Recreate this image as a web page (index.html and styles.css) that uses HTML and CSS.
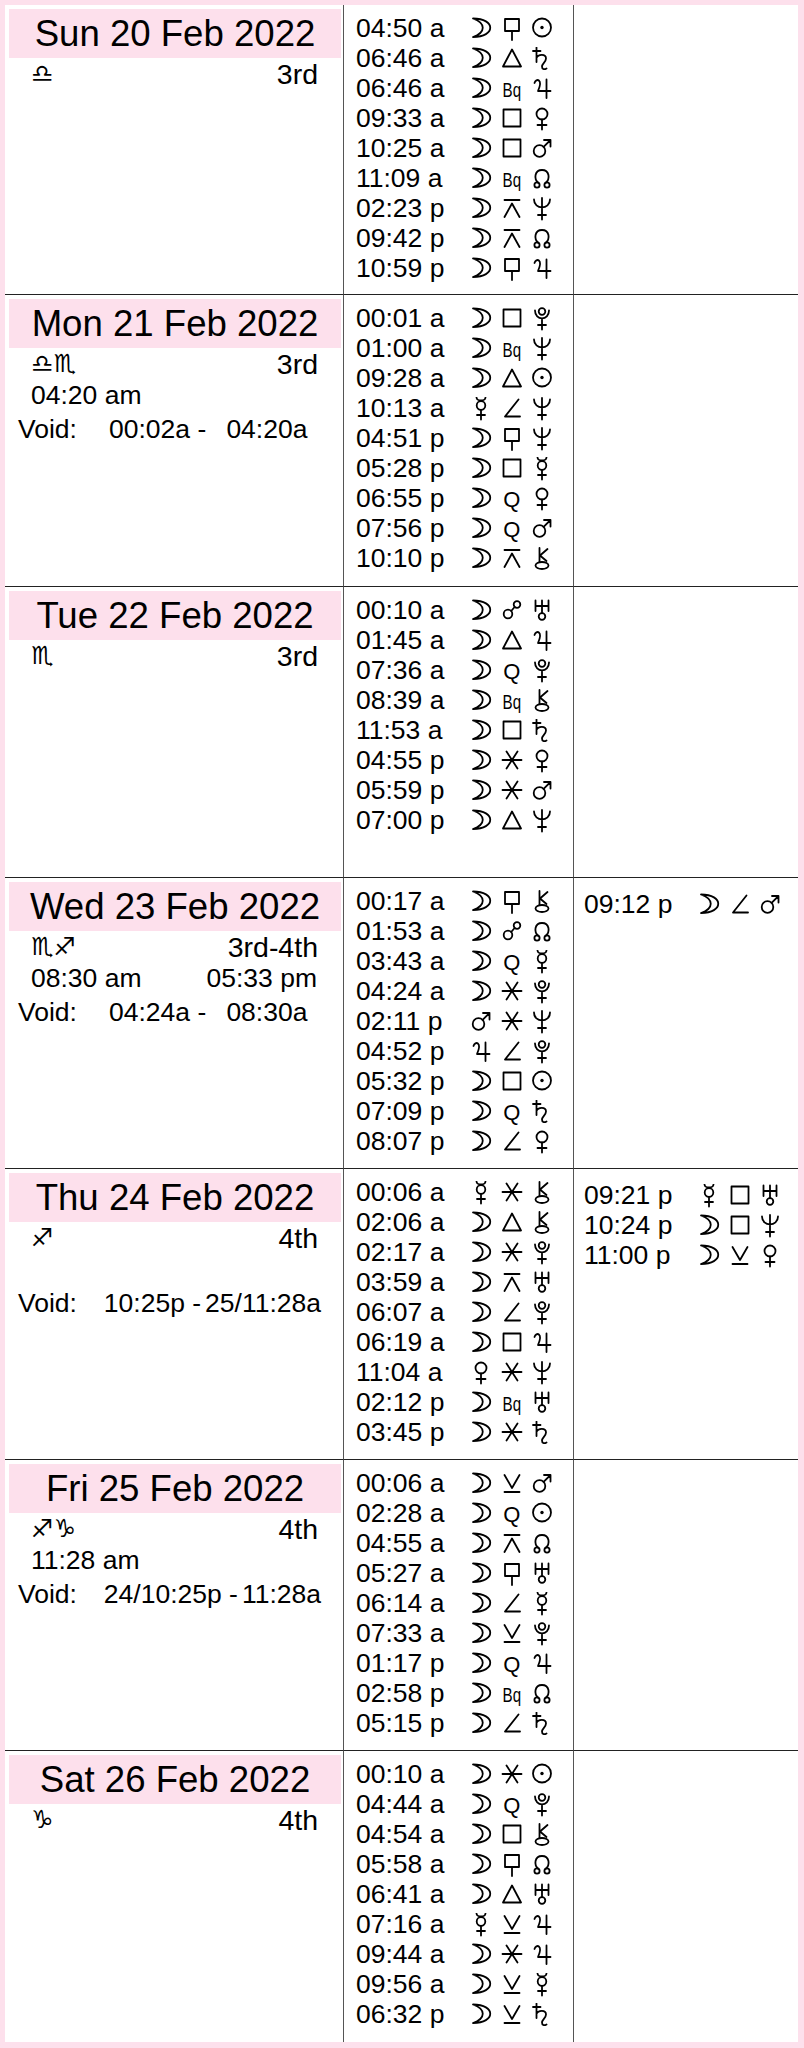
FILE: index.html
```html
<!DOCTYPE html>
<html>
<head>
<meta charset="utf-8">
<title>Moon aspects Feb 2022</title>
<link rel="stylesheet" href="styles.css">
</head>
<body>
<svg class="defs" xmlns="http://www.w3.org/2000/svg">
  <symbol id="mo" viewBox="0 0 22 26"><path d="M3,1.5C26,1.5 26,20 3,20C16,15.5 16,6 3,1.5Z"/></symbol>
  <symbol id="sesq" viewBox="0 0 22 26"><rect x="4" y="2" width="14" height="12"/><path d="M11,14V23"/></symbol>
  <symbol id="tri" viewBox="0 0 22 26"><path d="M2,19.5L11,2.5L20,19.5Z"/></symbol>
  <symbol id="sq" viewBox="0 0 22 26"><rect x="2.5" y="2.5" width="17" height="17"/></symbol>
  <symbol id="qx" viewBox="0 0 22 26"><path d="M3.5,3H18.5M3.5,20L11,6.5L18.5,20"/></symbol>
  <symbol id="ssx" viewBox="0 0 22 26"><path d="M3.5,3L11,16L18.5,3M3.5,20H18.5"/></symbol>
  <symbol id="sx" viewBox="0 0 22 26"><path d="M1.5,11H20.5M5.5,2.5L16.5,19.5M16.5,2.5L5.5,19.5"/></symbol>
  <symbol id="semi" viewBox="0 0 22 26"><path d="M17.5,2.5L4,19.5H19"/></symbol>
  <symbol id="opp" viewBox="0 0 22 26"><circle cx="7" cy="15" r="4.3"/><circle cx="16" cy="5.5" r="3.3"/><path d="M10.2,12L13.6,8"/></symbol>
  <symbol id="su" viewBox="0 0 22 26"><circle cx="11" cy="10.5" r="9"/><circle cx="11" cy="10.5" r="1.7" fill="#000" stroke="none"/></symbol>
  <symbol id="sa" viewBox="0 0 22 26"><path d="M5.5,0.5V15M2,4H9.5M5.5,11C7,7 15,6.5 15,11.5C15,15 11,16.5 11,19.5C11,22 13,23 15.5,21.5"/></symbol>
  <symbol id="ju" viewBox="0 0 22 26"><path d="M3.5,6C5,1 12.5,1.5 7,14H19.5M15.5,2.5V21"/></symbol>
  <symbol id="ve" viewBox="0 0 22 26"><circle cx="11" cy="7" r="5.5"/><path d="M11,12.5V22.5M6.5,18H15.5"/></symbol>
  <symbol id="ma" viewBox="0 0 22 26"><circle cx="8.5" cy="14" r="5.8"/><path d="M12.6,9.9L19.5,3M13,3H19.5V9.5"/></symbol>
  <symbol id="nn" viewBox="0 0 22 26"><path d="M7.5,16C2.5,12 3.5,3 11,3C18.5,3 19.5,12 14.5,16"/><circle cx="6" cy="18" r="2.6"/><circle cx="16" cy="18" r="2.6"/></symbol>
  <symbol id="ne" viewBox="0 0 22 26"><path d="M3,2.5C3,13 19,13 19,2.5M11,1V22.5M7,18H15"/></symbol>
  <symbol id="pl" viewBox="0 0 22 26"><circle cx="11" cy="4.5" r="3.3"/><path d="M4,3.5C4,14 18,14 18,3.5M11,11.5V22.5M7,18H15"/></symbol>
  <symbol id="me" viewBox="0 0 22 26"><path d="M6.5,0.5C7,4.5 15,4.5 15.5,0.5"/><circle cx="11" cy="8.5" r="4.3"/><path d="M11,12.8V22.5M7,18H15"/></symbol>
  <symbol id="ur" viewBox="0 0 22 26"><path d="M4.5,1.5V12M17.5,1.5V12M4.5,7H17.5M11,1.5V14"/><circle cx="11" cy="17.5" r="3.3"/></symbol>
  <symbol id="ch" viewBox="0 0 22 26"><path d="M8.5,1V14.5M16.5,2L9,8.5L15.5,14"/><ellipse cx="11" cy="18.5" rx="6.5" ry="3.5"/></symbol>
</svg>

<div class="cal">

  <!-- Sun 20 -->
  <div class="c1 b">
    <div class="hdr">Sun 20 Feb 2022</div>
    <div class="sign"><span class="sym">♎</span><span>3rd</span></div>
  </div>
  <div class="c2 b">
    <div class="ev"><span class="t">04:50 a</span><svg class="g"><use href="#mo"/></svg><svg class="g"><use href="#sesq"/></svg><svg class="g"><use href="#su"/></svg></div>
    <div class="ev"><span class="t">06:46 a</span><svg class="g"><use href="#mo"/></svg><svg class="g"><use href="#tri"/></svg><svg class="g"><use href="#sa"/></svg></div>
    <div class="ev"><span class="t">06:46 a</span><svg class="g"><use href="#mo"/></svg><span class="ta bq"><i>Bq</i></span><svg class="g"><use href="#ju"/></svg></div>
    <div class="ev"><span class="t">09:33 a</span><svg class="g"><use href="#mo"/></svg><svg class="g"><use href="#sq"/></svg><svg class="g"><use href="#ve"/></svg></div>
    <div class="ev"><span class="t">10:25 a</span><svg class="g"><use href="#mo"/></svg><svg class="g"><use href="#sq"/></svg><svg class="g"><use href="#ma"/></svg></div>
    <div class="ev"><span class="t">11:09 a</span><svg class="g"><use href="#mo"/></svg><span class="ta bq"><i>Bq</i></span><svg class="g"><use href="#nn"/></svg></div>
    <div class="ev"><span class="t">02:23 p</span><svg class="g"><use href="#mo"/></svg><svg class="g"><use href="#qx"/></svg><svg class="g"><use href="#ne"/></svg></div>
    <div class="ev"><span class="t">09:42 p</span><svg class="g"><use href="#mo"/></svg><svg class="g"><use href="#qx"/></svg><svg class="g"><use href="#nn"/></svg></div>
    <div class="ev"><span class="t">10:59 p</span><svg class="g"><use href="#mo"/></svg><svg class="g"><use href="#sesq"/></svg><svg class="g"><use href="#ju"/></svg></div>
  </div>
  <div class="c3 b"></div>

  <!-- Mon 21 -->
  <div class="c1 b">
    <div class="hdr">Mon 21 Feb 2022</div>
    <div class="sign"><span class="sym">♎♏</span><span>3rd</span></div>
    <div class="ing"><span>04:20 am</span><span></span></div>
    <table class="void"><tr><td class="vl">Void:</td><td>00:02a -</td><td>04:20a</td></tr></table>
  </div>
  <div class="c2 b">
    <div class="ev"><span class="t">00:01 a</span><svg class="g"><use href="#mo"/></svg><svg class="g"><use href="#sq"/></svg><svg class="g"><use href="#pl"/></svg></div>
    <div class="ev"><span class="t">01:00 a</span><svg class="g"><use href="#mo"/></svg><span class="ta bq"><i>Bq</i></span><svg class="g"><use href="#ne"/></svg></div>
    <div class="ev"><span class="t">09:28 a</span><svg class="g"><use href="#mo"/></svg><svg class="g"><use href="#tri"/></svg><svg class="g"><use href="#su"/></svg></div>
    <div class="ev"><span class="t">10:13 a</span><svg class="g"><use href="#me"/></svg><svg class="g"><use href="#semi"/></svg><svg class="g"><use href="#ne"/></svg></div>
    <div class="ev"><span class="t">04:51 p</span><svg class="g"><use href="#mo"/></svg><svg class="g"><use href="#sesq"/></svg><svg class="g"><use href="#ne"/></svg></div>
    <div class="ev"><span class="t">05:28 p</span><svg class="g"><use href="#mo"/></svg><svg class="g"><use href="#sq"/></svg><svg class="g"><use href="#me"/></svg></div>
    <div class="ev"><span class="t">06:55 p</span><svg class="g"><use href="#mo"/></svg><span class="ta">Q</span><svg class="g"><use href="#ve"/></svg></div>
    <div class="ev"><span class="t">07:56 p</span><svg class="g"><use href="#mo"/></svg><span class="ta">Q</span><svg class="g"><use href="#ma"/></svg></div>
    <div class="ev"><span class="t">10:10 p</span><svg class="g"><use href="#mo"/></svg><svg class="g"><use href="#qx"/></svg><svg class="g"><use href="#ch"/></svg></div>
  </div>
  <div class="c3 b"></div>

  <!-- Tue 22 -->
  <div class="c1 b">
    <div class="hdr">Tue 22 Feb 2022</div>
    <div class="sign"><span class="sym">♏</span><span>3rd</span></div>
  </div>
  <div class="c2 b">
    <div class="ev"><span class="t">00:10 a</span><svg class="g"><use href="#mo"/></svg><svg class="g"><use href="#opp"/></svg><svg class="g"><use href="#ur"/></svg></div>
    <div class="ev"><span class="t">01:45 a</span><svg class="g"><use href="#mo"/></svg><svg class="g"><use href="#tri"/></svg><svg class="g"><use href="#ju"/></svg></div>
    <div class="ev"><span class="t">07:36 a</span><svg class="g"><use href="#mo"/></svg><span class="ta">Q</span><svg class="g"><use href="#pl"/></svg></div>
    <div class="ev"><span class="t">08:39 a</span><svg class="g"><use href="#mo"/></svg><span class="ta bq"><i>Bq</i></span><svg class="g"><use href="#ch"/></svg></div>
    <div class="ev"><span class="t">11:53 a</span><svg class="g"><use href="#mo"/></svg><svg class="g"><use href="#sq"/></svg><svg class="g"><use href="#sa"/></svg></div>
    <div class="ev"><span class="t">04:55 p</span><svg class="g"><use href="#mo"/></svg><svg class="g"><use href="#sx"/></svg><svg class="g"><use href="#ve"/></svg></div>
    <div class="ev"><span class="t">05:59 p</span><svg class="g"><use href="#mo"/></svg><svg class="g"><use href="#sx"/></svg><svg class="g"><use href="#ma"/></svg></div>
    <div class="ev"><span class="t">07:00 p</span><svg class="g"><use href="#mo"/></svg><svg class="g"><use href="#tri"/></svg><svg class="g"><use href="#ne"/></svg></div>
  </div>
  <div class="c3 b"></div>

  <!-- Wed 23 -->
  <div class="c1 b">
    <div class="hdr">Wed 23 Feb 2022</div>
    <div class="sign"><span class="sym">♏♐</span><span>3rd-4th</span></div>
    <div class="ing"><span>08:30 am</span><span>05:33 pm</span></div>
    <table class="void"><tr><td class="vl">Void:</td><td>04:24a -</td><td>08:30a</td></tr></table>
  </div>
  <div class="c2 b">
    <div class="ev"><span class="t">00:17 a</span><svg class="g"><use href="#mo"/></svg><svg class="g"><use href="#sesq"/></svg><svg class="g"><use href="#ch"/></svg></div>
    <div class="ev"><span class="t">01:53 a</span><svg class="g"><use href="#mo"/></svg><svg class="g"><use href="#opp"/></svg><svg class="g"><use href="#nn"/></svg></div>
    <div class="ev"><span class="t">03:43 a</span><svg class="g"><use href="#mo"/></svg><span class="ta">Q</span><svg class="g"><use href="#me"/></svg></div>
    <div class="ev"><span class="t">04:24 a</span><svg class="g"><use href="#mo"/></svg><svg class="g"><use href="#sx"/></svg><svg class="g"><use href="#pl"/></svg></div>
    <div class="ev"><span class="t">02:11 p</span><svg class="g"><use href="#ma"/></svg><svg class="g"><use href="#sx"/></svg><svg class="g"><use href="#ne"/></svg></div>
    <div class="ev"><span class="t">04:52 p</span><svg class="g"><use href="#ju"/></svg><svg class="g"><use href="#semi"/></svg><svg class="g"><use href="#pl"/></svg></div>
    <div class="ev"><span class="t">05:32 p</span><svg class="g"><use href="#mo"/></svg><svg class="g"><use href="#sq"/></svg><svg class="g"><use href="#su"/></svg></div>
    <div class="ev"><span class="t">07:09 p</span><svg class="g"><use href="#mo"/></svg><span class="ta">Q</span><svg class="g"><use href="#sa"/></svg></div>
    <div class="ev"><span class="t">08:07 p</span><svg class="g"><use href="#mo"/></svg><svg class="g"><use href="#semi"/></svg><svg class="g"><use href="#ve"/></svg></div>
  </div>
  <div class="c3 b">
    <div class="ev"><span class="t">09:12 p</span><svg class="g"><use href="#mo"/></svg><svg class="g"><use href="#semi"/></svg><svg class="g"><use href="#ma"/></svg></div>
  </div>

  <!-- Thu 24 -->
  <div class="c1 b">
    <div class="hdr">Thu 24 Feb 2022</div>
    <div class="sign"><span class="sym">♐</span><span>4th</span></div>
    <div class="ing"></div>
    <table class="void"><tr><td class="vl">Void:</td><td>10:25p -</td><td>25/11:28a</td></tr></table>
  </div>
  <div class="c2 b">
    <div class="ev"><span class="t">00:06 a</span><svg class="g"><use href="#me"/></svg><svg class="g"><use href="#sx"/></svg><svg class="g"><use href="#ch"/></svg></div>
    <div class="ev"><span class="t">02:06 a</span><svg class="g"><use href="#mo"/></svg><svg class="g"><use href="#tri"/></svg><svg class="g"><use href="#ch"/></svg></div>
    <div class="ev"><span class="t">02:17 a</span><svg class="g"><use href="#mo"/></svg><svg class="g"><use href="#sx"/></svg><svg class="g"><use href="#pl"/></svg></div>
    <div class="ev"><span class="t">03:59 a</span><svg class="g"><use href="#mo"/></svg><svg class="g"><use href="#qx"/></svg><svg class="g"><use href="#ur"/></svg></div>
    <div class="ev"><span class="t">06:07 a</span><svg class="g"><use href="#mo"/></svg><svg class="g"><use href="#semi"/></svg><svg class="g"><use href="#pl"/></svg></div>
    <div class="ev"><span class="t">06:19 a</span><svg class="g"><use href="#mo"/></svg><svg class="g"><use href="#sq"/></svg><svg class="g"><use href="#ju"/></svg></div>
    <div class="ev"><span class="t">11:04 a</span><svg class="g"><use href="#ve"/></svg><svg class="g"><use href="#sx"/></svg><svg class="g"><use href="#ne"/></svg></div>
    <div class="ev"><span class="t">02:12 p</span><svg class="g"><use href="#mo"/></svg><span class="ta bq"><i>Bq</i></span><svg class="g"><use href="#ur"/></svg></div>
    <div class="ev"><span class="t">03:45 p</span><svg class="g"><use href="#mo"/></svg><svg class="g"><use href="#sx"/></svg><svg class="g"><use href="#sa"/></svg></div>
  </div>
  <div class="c3 b">
    <div class="ev"><span class="t">09:21 p</span><svg class="g"><use href="#me"/></svg><svg class="g"><use href="#sq"/></svg><svg class="g"><use href="#ur"/></svg></div>
    <div class="ev"><span class="t">10:24 p</span><svg class="g"><use href="#mo"/></svg><svg class="g"><use href="#sq"/></svg><svg class="g"><use href="#ne"/></svg></div>
    <div class="ev"><span class="t">11:00 p</span><svg class="g"><use href="#mo"/></svg><svg class="g"><use href="#ssx"/></svg><svg class="g"><use href="#ve"/></svg></div>
  </div>

  <!-- Fri 25 -->
  <div class="c1 b">
    <div class="hdr">Fri 25 Feb 2022</div>
    <div class="sign"><span class="sym">♐♑</span><span>4th</span></div>
    <div class="ing"><span>11:28 am</span><span></span></div>
    <table class="void"><tr><td class="vl">Void:</td><td>24/10:25p -</td><td>11:28a</td></tr></table>
  </div>
  <div class="c2 b">
    <div class="ev"><span class="t">00:06 a</span><svg class="g"><use href="#mo"/></svg><svg class="g"><use href="#ssx"/></svg><svg class="g"><use href="#ma"/></svg></div>
    <div class="ev"><span class="t">02:28 a</span><svg class="g"><use href="#mo"/></svg><span class="ta">Q</span><svg class="g"><use href="#su"/></svg></div>
    <div class="ev"><span class="t">04:55 a</span><svg class="g"><use href="#mo"/></svg><svg class="g"><use href="#qx"/></svg><svg class="g"><use href="#nn"/></svg></div>
    <div class="ev"><span class="t">05:27 a</span><svg class="g"><use href="#mo"/></svg><svg class="g"><use href="#sesq"/></svg><svg class="g"><use href="#ur"/></svg></div>
    <div class="ev"><span class="t">06:14 a</span><svg class="g"><use href="#mo"/></svg><svg class="g"><use href="#semi"/></svg><svg class="g"><use href="#me"/></svg></div>
    <div class="ev"><span class="t">07:33 a</span><svg class="g"><use href="#mo"/></svg><svg class="g"><use href="#ssx"/></svg><svg class="g"><use href="#pl"/></svg></div>
    <div class="ev"><span class="t">01:17 p</span><svg class="g"><use href="#mo"/></svg><span class="ta">Q</span><svg class="g"><use href="#ju"/></svg></div>
    <div class="ev"><span class="t">02:58 p</span><svg class="g"><use href="#mo"/></svg><span class="ta bq"><i>Bq</i></span><svg class="g"><use href="#nn"/></svg></div>
    <div class="ev"><span class="t">05:15 p</span><svg class="g"><use href="#mo"/></svg><svg class="g"><use href="#semi"/></svg><svg class="g"><use href="#sa"/></svg></div>
  </div>
  <div class="c3 b"></div>

  <!-- Sat 26 -->
  <div class="c1">
    <div class="hdr">Sat 26 Feb 2022</div>
    <div class="sign"><span class="sym">♑</span><span>4th</span></div>
  </div>
  <div class="c2">
    <div class="ev"><span class="t">00:10 a</span><svg class="g"><use href="#mo"/></svg><svg class="g"><use href="#sx"/></svg><svg class="g"><use href="#su"/></svg></div>
    <div class="ev"><span class="t">04:44 a</span><svg class="g"><use href="#mo"/></svg><span class="ta">Q</span><svg class="g"><use href="#pl"/></svg></div>
    <div class="ev"><span class="t">04:54 a</span><svg class="g"><use href="#mo"/></svg><svg class="g"><use href="#sq"/></svg><svg class="g"><use href="#ch"/></svg></div>
    <div class="ev"><span class="t">05:58 a</span><svg class="g"><use href="#mo"/></svg><svg class="g"><use href="#sesq"/></svg><svg class="g"><use href="#nn"/></svg></div>
    <div class="ev"><span class="t">06:41 a</span><svg class="g"><use href="#mo"/></svg><svg class="g"><use href="#tri"/></svg><svg class="g"><use href="#ur"/></svg></div>
    <div class="ev"><span class="t">07:16 a</span><svg class="g"><use href="#me"/></svg><svg class="g"><use href="#ssx"/></svg><svg class="g"><use href="#ju"/></svg></div>
    <div class="ev"><span class="t">09:44 a</span><svg class="g"><use href="#mo"/></svg><svg class="g"><use href="#sx"/></svg><svg class="g"><use href="#ju"/></svg></div>
    <div class="ev"><span class="t">09:56 a</span><svg class="g"><use href="#mo"/></svg><svg class="g"><use href="#ssx"/></svg><svg class="g"><use href="#me"/></svg></div>
    <div class="ev"><span class="t">06:32 p</span><svg class="g"><use href="#mo"/></svg><svg class="g"><use href="#ssx"/></svg><svg class="g"><use href="#sa"/></svg></div>
  </div>
  <div class="c3"></div>

</div>
</body>
</html>
```

FILE: styles.css
```css
* { box-sizing: border-box; }

html, body { margin: 0; }

body {
  background: #fde0ec;
  padding: 5px 6px 6px 5px;
  font-family: "Liberation Sans", Arial, sans-serif;
  color: #000;
}

.defs {
  position: absolute;
  width: 0;
  height: 0;
  overflow: hidden;
}

.cal {
  display: grid;
  grid-template-columns: 339px 230px 224px;
  grid-template-rows: 290px 292px 291px 291px 291px 291px 291px;
  width: 793px;
  background: #fff;
}

.c1 {
  border-right: 1px solid #555;
  padding: 4px 2px 0 4px;
}

.c2 {
  border-right: 1px solid #555;
  padding: 8px 0 0 12px;
}

.c3 {
  padding: 11px 0 0 10px;
}

.b { border-bottom: 1px solid #222; }

.hdr {
  height: 49px;
  line-height: 49px;
  background: #fde0ec;
  text-align: center;
  font-size: 36.6px;
  white-space: nowrap;
}

.sign {
  display: flex;
  justify-content: space-between;
  height: 32px;
  line-height: 32px;
  font-size: 28.5px;
  padding: 0 23px 0 22px;
}

.sym {
  font-family: "DejaVu Sans", sans-serif;
  font-size: 25px;
}

.ing {
  display: flex;
  justify-content: space-between;
  height: 31px;
  line-height: 31px;
  font-size: 26.5px;
  padding: 0 24px 0 22px;
}

.void {
  margin: 3px 0 0 7px;
  border-collapse: collapse;
  width: 307px;
  font-size: 26.5px;
  line-height: 31px;
}

.void td {
  padding: 0 2px;
  white-space: nowrap;
}

.void .vl { width: 91px; }

.ev {
  height: 30px;
  line-height: 30px;
  font-size: 26.5px;
  white-space: nowrap;
}

.t {
  display: inline-block;
  width: 110px;
}

.g {
  display: inline-block;
  width: 22px;
  height: 26px;
  margin: 0 4.25px;
  vertical-align: -6px;
  overflow: visible;
  fill: none;
  stroke: #000;
  stroke-width: 1.8;
  stroke-linejoin: round;
  stroke-linecap: round;
}

.ta {
  display: inline-block;
  width: 22px;
  margin: 0 4.25px;
  text-align: center;
  font-size: 22px;
}

.bq i {
  display: inline-block;
  font-style: normal;
  font-size: 21px;
  margin: 0 -2px;
  transform: scaleX(0.72);
}
```
